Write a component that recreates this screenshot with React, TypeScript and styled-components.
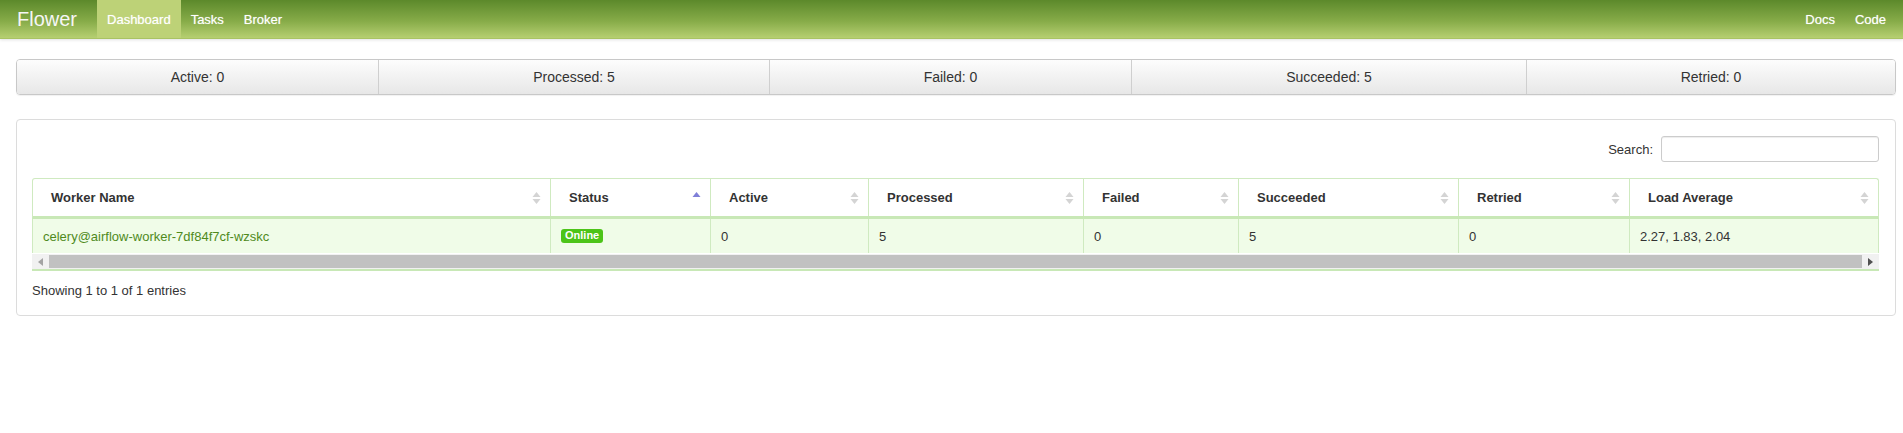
import React from 'react'
import styled, { createGlobalStyle } from 'styled-components'

const GlobalStyle = createGlobalStyle`
  body {
    margin: 0;
    background: #fff;
    font-family: "Liberation Sans", Arial, sans-serif;
    font-size: 13px;
    color: #333;
  }
`

const Container = styled.div`
  padding: 0 7px 0 16px;
`

const NavBar = styled.div`
  height: 38px;
  background-image: linear-gradient(to bottom, #5c892b 0%, #86ab48 55%, #b6cf71 100%);
  border-bottom: 1px solid #a9c364;
  box-shadow: 0 1px 3px rgba(0, 0, 0, 0.12);
`

const NavInner = styled(Container)`
  display: flex;
  align-items: stretch;
  height: 100%;
`

const Brand = styled.a`
  display: flex;
  align-items: center;
  padding: 0 20px 0 1px;
  font-size: 20px;
  color: #f6f6f6;
  text-decoration: none;
`

const NavList = styled.div<{ right?: boolean }>`
  display: flex;
  margin-left: ${({ right }) => (right ? 'auto' : '0')};
`

const NavItem = styled.a<{ active?: boolean }>`
  display: flex;
  align-items: center;
  padding: 0 10px;
  color: #fff;
  font-size: 13px;
  text-decoration: none;
  text-shadow: 0 0 1px rgba(255, 255, 255, 0.6);
  background: ${({ active }) => (active ? '#bdd277' : 'transparent')};
`

const Stats = styled.div`
  display: grid;
  grid-template-columns: 361px 391px 362px 395px 1fr;
  margin-top: 20px;
  height: 34px;
  border: 1px solid #c8c8c8;
  border-radius: 4px;
  overflow: hidden;
  box-shadow: 0 1px 1px rgba(0, 0, 0, 0.06);
`

const StatCell = styled.div`
  display: flex;
  align-items: center;
  justify-content: center;
  font-size: 14px;
  color: #333;
  background-image: linear-gradient(to bottom, #fdfdfd, #e7e7e7);
  & + & {
    border-left: 1px solid #cfcfcf;
  }
`

const Panel = styled.div`
  margin-top: 24px;
  border: 1px solid #dcdcdc;
  border-radius: 4px;
  padding: 16px 16px 16px 15px;
`

const SearchRow = styled.div`
  display: flex;
  justify-content: flex-end;
  align-items: center;
  gap: 8px;
  height: 26px;
`

const SearchLabel = styled.label`
  font-size: 13px;
  color: #333;
`

const SearchInput = styled.input`
  box-sizing: border-box;
  width: 218px;
  height: 26px;
  border: 1px solid #ccc;
  border-radius: 3px;
  box-shadow: inset 0 1px 1px rgba(0, 0, 0, 0.075);
`

const TableWrap = styled.div`
  margin-top: 16px;
`

const Grid = styled.div`
  display: grid;
  grid-template-columns: 517px 160px 158px 215px 155px 220px 171px 1fr;
`

const HeadRow = styled(Grid)`
  border: 1px solid #cfeac0;
  border-bottom: 3px solid #c8e8b6;
  border-radius: 3px 3px 0 0;
  height: 37px;
  background: #fff;
`

const HeadCell = styled.div`
  display: flex;
  align-items: center;
  justify-content: space-between;
  padding: 0 9px 0 18px;
  font-weight: bold;
  color: #333;
  & + & {
    border-left: 1px solid #cfeac0;
  }
`

const BodyRow = styled(Grid)`
  height: 34px;
  background: #f0fce8;
  border-left: 1px solid #cfeac0;
  border-right: 1px solid #cfeac0;
`

const Cell = styled.div`
  display: flex;
  align-items: center;
  padding: 0 10px;
  color: #333;
  & + & {
    border-left: 1px solid #cfeac0;
  }
`

const WorkerLink = styled.a`
  color: #4f8a1c;
  text-decoration: none;
`

const Badge = styled.span`
  display: inline-block;
  padding: 1px 4px 2px;
  border-radius: 3px;
  background: #4cc418;
  color: #fff;
  font-size: 11px;
  font-weight: bold;
  line-height: 11px;
`

const ScrollBar = styled.div`
  display: flex;
  align-items: center;
  height: 15px;
  margin-top: 1px;
  background: #f1f1f1;
  border-bottom: 2px solid #c8e8b6;
`

const ScrollArrow = styled.div`
  width: 17px;
  display: flex;
  align-items: center;
  justify-content: center;
  color: #a3a3a3;
`

const ScrollThumb = styled.div`
  flex: 1;
  height: 13px;
  background: #c1c1c1;
`

const Info = styled.div`
  margin-top: 12px;
  line-height: 16px;
`

const SortIcon = ({ active }: { active?: boolean }) => (
  <svg width="9" height="14" viewBox="0 0 9 14">
    {active ? (
      <path d="M0.5 6 L4.5 1 L8.5 6 Z" fill="#7f7fd8" />
    ) : (
      <>
        <path d="M0.5 6 L4.5 1 L8.5 6 Z" fill="#d4d4d4" />
        <path d="M0.5 8 L4.5 13 L8.5 8 Z" fill="#d4d4d4" />
      </>
    )}
  </svg>
)

const Arrow = ({ dir }: { dir: 'left' | 'right' }) => (
  <svg width="5" height="8" viewBox="0 0 5 8">
    {dir === 'left' ? (
      <path d="M5 0 L0 4 L5 8 Z" fill="#a3a3a3" />
    ) : (
      <path d="M0 0 L5 4 L0 8 Z" fill="#505050" />
    )}
  </svg>
)

const stats = [
  ['Active', 0],
  ['Processed', 5],
  ['Failed', 0],
  ['Succeeded', 5],
  ['Retried', 0],
]

const columns = ['Worker Name', 'Status', 'Active', 'Processed', 'Failed', 'Succeeded', 'Retried', 'Load Average']

const workers = [
  {
    name: 'celery@airflow-worker-7df84f7cf-wzskc',
    online: true,
    active: 0,
    processed: 5,
    failed: 0,
    succeeded: 5,
    retried: 0,
    load: '2.27, 1.83, 2.04',
  },
]

const App = () => {
  return (
    <>
      <GlobalStyle />
      <NavBar>
        <NavInner>
          <Brand href="#">Flower</Brand>
          <NavList>
            <NavItem href="#" active>
              Dashboard
            </NavItem>
            <NavItem href="#">Tasks</NavItem>
            <NavItem href="#">Broker</NavItem>
          </NavList>
          <NavList right>
            <NavItem href="#">Docs</NavItem>
            <NavItem href="#">Code</NavItem>
          </NavList>
        </NavInner>
      </NavBar>
      <Container>
        <Stats>
          {stats.map(([label, value]) => (
            <StatCell key={label}>
              {label}: {value}
            </StatCell>
          ))}
        </Stats>
        <Panel>
          <SearchRow>
            <SearchLabel>Search:</SearchLabel>
            <SearchInput type="text" />
          </SearchRow>
          <TableWrap>
            <HeadRow>
              {columns.map((c) => (
                <HeadCell key={c}>
                  {c}
                  <SortIcon active={c === 'Status'} />
                </HeadCell>
              ))}
            </HeadRow>
            {workers.map((w) => (
              <BodyRow key={w.name}>
                <Cell>
                  <WorkerLink href="#">{w.name}</WorkerLink>
                </Cell>
                <Cell>{w.online && <Badge>Online</Badge>}</Cell>
                <Cell>{w.active}</Cell>
                <Cell>{w.processed}</Cell>
                <Cell>{w.failed}</Cell>
                <Cell>{w.succeeded}</Cell>
                <Cell>{w.retried}</Cell>
                <Cell>{w.load}</Cell>
              </BodyRow>
            ))}
            <ScrollBar>
              <ScrollArrow>
                <Arrow dir="left" />
              </ScrollArrow>
              <ScrollThumb />
              <ScrollArrow>
                <Arrow dir="right" />
              </ScrollArrow>
            </ScrollBar>
          </TableWrap>
          <Info>Showing 1 to 1 of 1 entries</Info>
        </Panel>
      </Container>
    </>
  )
}

export default App
